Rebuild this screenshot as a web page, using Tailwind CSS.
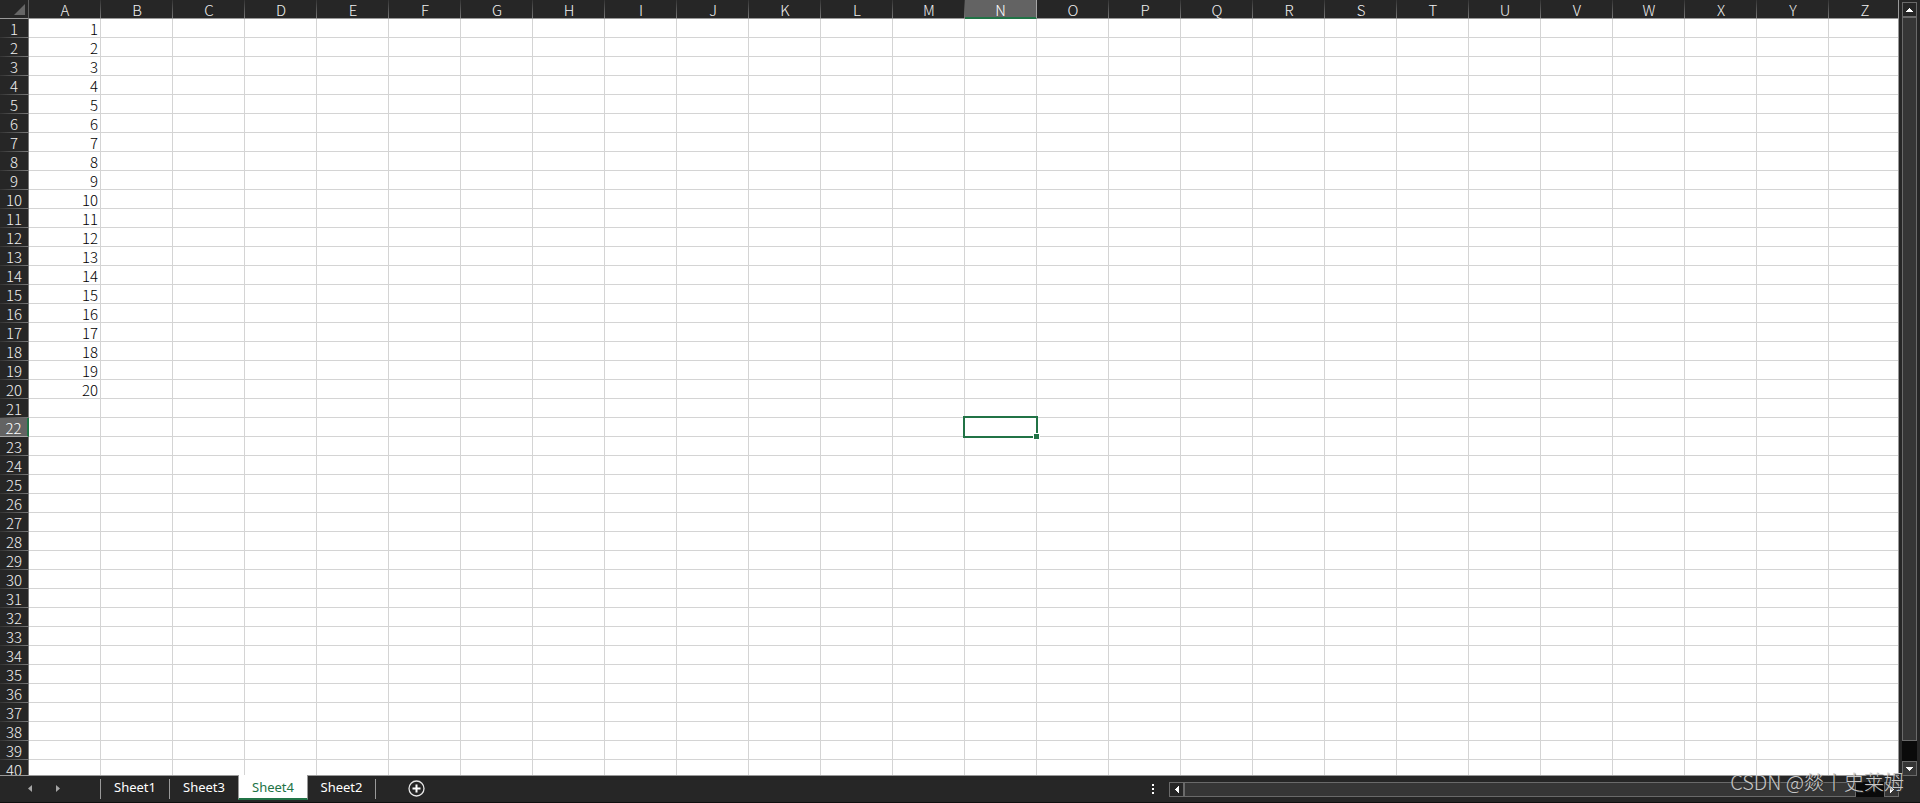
<!DOCTYPE html>
<html lang="zh-CN">
<head>
    <meta charset="UTF-8">
    <meta name="viewport" content="width=device-width, initial-scale=1.0">
    <title>Sheet4</title>
    <script src="https://cdn.jsdelivr.net/npm/@tailwindcss/browser@4"></script>
    <style>
        body { font-family: 'Noto Sans CJK SC', sans-serif; }
        .tab-text { font-family: 'Noto Sans', 'Noto Sans CJK SC', sans-serif; }
    </style>
</head>
<body class="relative flex h-screen flex-col overflow-hidden bg-[#262626]">
    <main class="flex min-h-0 flex-1">
        <div class="min-w-0 flex-1 overflow-hidden border-r border-b border-[#999999] bg-white">
            <table class="w-max table-fixed border-separate border-spacing-0 text-[15px] leading-4 font-light">
                <thead>
                    <tr id="columns">
                        <th class="h-[19px] w-[29px] border-r border-b border-r-[#5f5f5f] border-b-[#999999] bg-[#262626] p-0">
                            <svg class="ml-auto mr-[3px] h-[11px] w-[11px]" viewBox="0 0 11 11"><path d="M11 0V11H0Z" fill="#666666"/></svg>
                        </th>
                    </tr>
                </thead>
                <tbody id="rows"></tbody>
            </table>
        </div>

        <!-- Vertical scroll bar -->
        <div class="ml-[3px] mr-[3px] flex w-[15px] flex-col pt-0.5">
            <button type="button" aria-label="Scroll up" class="flex h-[15px] items-center justify-center border border-[#6a6a6a] bg-[#262626]">
                <svg class="h-1 w-[7px]" viewBox="0 0 7 4" shape-rendering="crispEdges"><path d="M3 0H4V1H5V2H6V3H7V4H0V3H1V2H2V1H3Z" fill="#fff"/></svg>
            </button>
            <div class="flex flex-1 flex-col bg-[#0a0a0a]">
                <div class="h-[97.3%] border border-[#6a6a6a] bg-[#363636]"></div>
            </div>
            <button type="button" aria-label="Scroll down" class="flex h-[15px] items-center justify-center border border-[#6a6a6a] bg-[#363636]">
                <svg class="h-1 w-[7px]" viewBox="0 0 7 4" shape-rendering="crispEdges"><path d="M0 0H7V1H6V2H5V3H4V4H3V3H2V2H1V1H0Z" fill="#fff"/></svg>
            </button>
        </div>
    </main>

    <footer class="flex h-[27px] border-b border-[#0f0f0f] pr-[21px]">
        <div class="flex w-[100px] items-start gap-6 pt-[9px] pl-7">
            <button type="button" aria-label="Previous sheet"><svg class="h-[7px] w-1" viewBox="0 0 4 7"><path d="M4 0V7L0 3.5Z" fill="#a6a6a6"/></svg></button>
            <button type="button" aria-label="Next sheet"><svg class="h-[7px] w-1" viewBox="0 0 4 7"><path d="M0 0V7L4 3.5Z" fill="#a6a6a6"/></svg></button>
        </div>
        <nav class="tab-text flex text-[13px] leading-5 text-white">
            <div class="my-[3px] w-px bg-[#999999]"></div>
            <button type="button" class="w-[68px] pb-1">Sheet1</button>
            <div class="my-[3px] w-px bg-[#999999]"></div>
            <button type="button" class="w-[68px] pb-1">Sheet3</button>
            <button type="button" class="-mt-px mb-0.5 w-[70px] border-x border-b-2 border-x-[#999999] border-b-[#217346] bg-white text-[#217346]">Sheet4</button>
            <button type="button" class="w-[67px] pb-1">Sheet2</button>
            <div class="my-[3px] w-px bg-[#999999]"></div>
        </nav>
        <button type="button" aria-label="New sheet" class="ml-8 self-start pt-1">
            <svg class="h-[17px] w-[17px]" viewBox="0 0 17 17" fill="none"><circle cx="8.500" cy="8.500" r="7.500" stroke="#e6e6e6" stroke-width="1.300"/><path d="M8.500 4.500V12.500M4.500 8.500H12.500" stroke="#fff" stroke-width="2"/></svg>
        </button>
        <div class="ml-auto flex w-[747px] pt-1.5">
            <div class="flex w-[17px] flex-col gap-0.5 pt-0.5">
                <span class="size-0.5 bg-white"></span>
                <span class="size-0.5 bg-white"></span>
                <span class="size-0.5 bg-white"></span>
            </div>
            <div class="flex h-[15px] flex-1">
                <button type="button" aria-label="Scroll left" class="flex w-[15px] items-center justify-center border border-[#6a6a6a] bg-[#262626]">
                    <svg class="h-[7px] w-1" viewBox="0 0 4 7" shape-rendering="crispEdges"><path d="M4 0V7H3V6H2V5H1V4H0V3H1V2H2V1H3V0Z" fill="#fff"/></svg>
                </button>
                <div class="flex-1 bg-[#0a0a0a]">
                    <div class="h-full w-[96%] border border-[#6a6a6a] bg-[#363636]"></div>
                </div>
                <button type="button" aria-label="Scroll right" class="flex w-[15px] items-center justify-center border border-[#6a6a6a] bg-[#363636]">
                    <svg class="h-[7px] w-1" viewBox="0 0 4 7" shape-rendering="crispEdges"><path d="M0 0V7H1V6H2V5H3V4H4V3H3V2H2V1H1V0Z" fill="#fff"/></svg>
                </button>
            </div>
        </div>
    </footer>

    <div class="absolute right-4 bottom-[7px] text-[20px] leading-7 font-light text-[#c8c8c8] text-shadow-[1px_1px_1px_#333333]">CSDN @燚丨史莱姆</div>

    <script>
        const letters = 'ABCDEFGHIJKLMNOPQRSTUVWXYZ'.split('');
        const values = Array.from({ length: 20 }, (_, i) => i + 1);
        const active = { column: 'N', row: 22 };

        const columnClass = 'h-[19px] w-[72px] border-b border-[#999999] bg-[#262626] bg-[linear-gradient(#333333,#777777)] bg-[length:1px_100%] bg-right bg-no-repeat p-0 pt-0.5 font-light text-[#f0f0f0]';
        const activeColumnClass = 'h-[19px] w-[72px] border-r border-b border-r-[#a6a6a6] border-b-[#217346] bg-[#636363] p-0 pt-0.5 font-light text-white shadow-[inset_0_-1px_#217346]';
        const rowClass = 'h-[19px] w-[29px] border-r border-[#777777] bg-[#262626] bg-[linear-gradient(to_right,#333333,#777777)] bg-[length:100%_1px] bg-bottom bg-no-repeat p-0 pt-px font-light text-[#f0f0f0]';
        const activeRowClass = 'h-[19px] w-[29px] border-r-2 border-b border-r-[#217346] border-b-[#a6a6a6] bg-[#636363] p-0 pt-0.5 font-light text-white';
        const cellClass = 'h-[19px] border-r border-b border-[#d4d4d4] p-0 pt-0.5 pr-0.5 text-right text-black';

        const columns = document.getElementById('columns');
        letters.forEach(letter => {
            const th = document.createElement('th');
            th.className = letter === active.column ? activeColumnClass : columnClass;
            th.textContent = letter;
            columns.appendChild(th);
        });

        // Outline and fill handle of the active cell
        const selection = `
            <div class="absolute -inset-0.5 border-2 border-[#217346]"></div>
            <div class="absolute -right-1 -bottom-1 size-[7px] border border-white bg-[#217346]"></div>`;

        const rows = document.getElementById('rows');
        for (let row = 1; row <= 40; row++) {
            const tr = document.createElement('tr');
            const th = document.createElement('th');
            th.className = row === active.row ? activeRowClass : rowClass;
            th.textContent = row;
            tr.appendChild(th);

            letters.forEach(letter => {
                const td = document.createElement('td');
                td.className = cellClass;
                if (letter === 'A' && row <= values.length) {
                    td.textContent = values[row - 1];
                }
                if (letter === active.column && row === active.row) {
                    td.classList.add('relative');
                    td.innerHTML = selection;
                }
                tr.appendChild(td);
            });
            rows.appendChild(tr);
        }
    </script>
</body>
</html>
